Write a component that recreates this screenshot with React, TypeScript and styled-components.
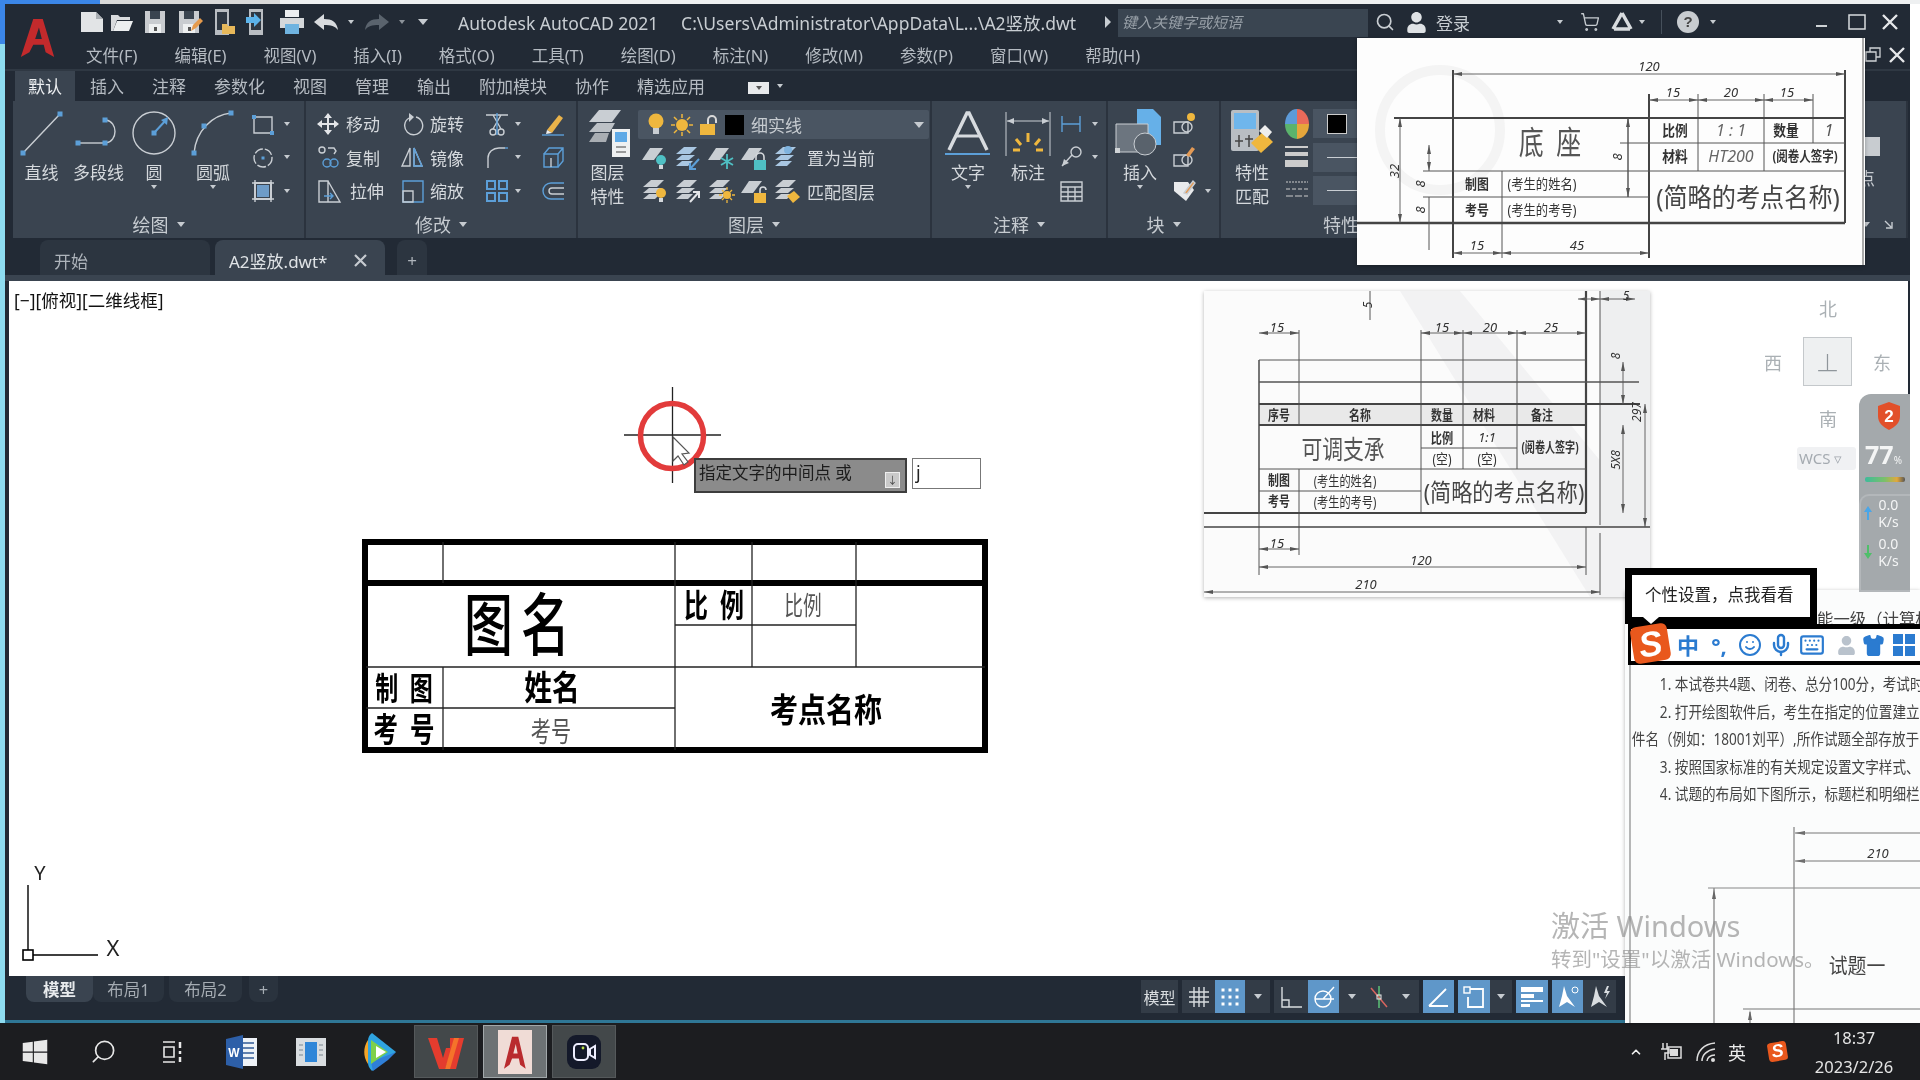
import React from "react";
import styled, { createGlobalStyle } from "styled-components";
import { Search, ShoppingCart, Smile, Mic, Keyboard, Shirt, ChevronUp } from "lucide-react";
import { FaUser, FaWindows } from "react-icons/fa";

const CJK = `"Noto Sans", "Noto Sans CJK SC", sans-serif`;
const LINE = "#c9ced3";
const BLUE = "#5c9fd8";
const GOLD = "#efb73e";
const CYAN = "#4fc0c4";

const Global = createGlobalStyle`
  html, body { margin: 0; padding: 0; background: #fff; }
  body { font-family: ${CJK}; overflow: hidden; }
  * { box-sizing: border-box; }
`;

const Page = styled.div`
  position: relative;
  width: 1920px;
  height: 1080px;
  display: flex;
  flex-direction: column;
  overflow: hidden;
  background: #fff;
  filter: blur(0.5px);
`;

const TopStrip = styled.div`
  height: 4px;
  background: linear-gradient(to right, #3b86e8 0 100px, #d9d9d9 100px 280px, #eef0f1 280px 1920px);
`;

const Body = styled.div`
  flex: 1;
  display: flex;
  min-height: 0;
`;

const LeftEdge = styled.div`
  width: 5px;
  background: linear-gradient(to bottom, #3b86e8 0 40px, #8edcf0 40px);
`;

const Win = styled.div`
  width: 1905px;
  display: flex;
  flex-direction: column;
  background: #222a35;
  border-bottom: 3px solid #2f7796;
`;

const Header = styled.div`
  display: flex;
  height: 67px;
  border-bottom: 2px solid #2f3843;
`;

const LogoCell = styled.div`
  width: 70px;
  padding: 14px 0 0 15px;
`;

const HeaderRows = styled.div`
  flex: 1;
  display: flex;
  flex-direction: column;
`;

const TitleRow = styled.div`
  height: 36px;
  display: flex;
  align-items: center;
  color: #c8cdd2;
  font-size: 18px;
`;

const QatIcon = styled.div<{ $w?: number }>`
  width: ${(p) => p.$w ?? 34}px;
  display: flex;
  justify-content: center;
  align-items: center;
`;

const TitleText = styled.span`
  margin-left: 21px;
  white-space: pre;
  width: 647px;
  font-size: 17.5px;
`;

const SearchBox = styled.div`
  width: 250px;
  height: 28px;
  margin-left: 6px;
  margin-top: 2px;
  padding-left: 4px;
  background: #3a4551;
  color: #98a0a8;
  font-size: 15px;
  font-style: italic;
  line-height: 26px;
`;

const TitleSide = styled.div<{ $w: number; $ml?: number }>`
  width: ${(p) => p.$w}px;
  margin-left: ${(p) => p.$ml ?? 0}px;
  display: flex;
  justify-content: center;
  align-items: center;
  color: #c8cdd2;
  font-size: 17px;
`;

const WinDivider = styled.div`
  width: 1px;
  height: 24px;
  background: #46505b;
  margin: 0 14px;
`;

const MenuRow = styled.div`
  height: 29px;
  display: flex;
  align-items: center;
  gap: 37px;
  padding-left: 11px;
  color: #b5bbc2;
  font-size: 16.5px;
`;

const MenuItem = styled.span`
  white-space: nowrap;
`;

const MenuEnd = styled.div`
  margin-left: auto;
  padding-right: 4px;
  display: flex;
  align-items: center;
  gap: 7px;
`;

const TabRow = styled.div`
  height: 30px;
  display: flex;
  align-items: stretch;
  padding-left: 10px;
  gap: 2px;
  color: #b5bbc2;
  font-size: 17px;
`;

const RibbonTab = styled.div<{ $active?: boolean }>`
  padding: 2px 13px 0;
  line-height: 28px;
  white-space: nowrap;
  background: ${(p) => (p.$active ? "#3a4450" : "transparent")};
  color: ${(p) => (p.$active ? "#eceff1" : "#b5bbc2")};
`;

const TabToggle = styled.div`
  width: 21px;
  height: 12px;
  margin: 11px 4px 0 28px;
  background: #e8eaec;
  display: flex;
  align-items: center;
  justify-content: center;
`;

const Ribbon = styled.div`
  height: 137px;
  display: flex;
  padding-left: 8px;
`;

const Panel = styled.div<{ $w: number }>`
  width: ${(p) => p.$w}px;
  display: flex;
  flex-direction: column;
  background: #3a4450;
  border-right: 2px solid #2b333e;
`;

const PanelBody = styled.div<{ $pl?: number }>`
  flex: 1;
  display: flex;
  padding-left: ${(p) => p.$pl ?? 0}px;
  min-height: 0;
`;

const PanelFoot = styled.div<{ $pl?: number }>`
  height: 28px;
  display: flex;
  align-items: center;
  justify-content: ${(p) => (p.$pl === undefined ? "center" : "flex-start")};
  padding-left: ${(p) => p.$pl ?? 0}px;
  gap: 8px;
  color: #c6cbd0;
  font-size: 18px;
`;

const TailMarks = styled.div`
  margin-left: 495px;
  display: flex;
  align-items: center;
  gap: 14px;
`;

const LargeTool = styled.div<{ $w: number }>`
  width: ${(p) => p.$w}px;
  flex: none;
  display: flex;
  flex-direction: column;
  align-items: center;
  padding-top: 8px;
  color: #d5d9dd;
  font-size: 17px;
  line-height: 24px;
`;

const LargeIcon = styled.div`
  height: 48px;
  margin-bottom: 4px;
  display: flex;
  align-items: center;
`;

const ToolLabel = styled.span`
  white-space: nowrap;
`;

const Stack = styled.div<{ $pl?: number }>`
  padding: 6px 0 0 ${(p) => p.$pl ?? 0}px;
  display: flex;
  flex-direction: column;
`;

const StackRow = styled.div`
  height: 33.5px;
  display: flex;
  align-items: center;
  gap: 9px;
`;

const ModifyGrid = styled.div`
  display: grid;
  grid-template-columns: 84px 85px 56px 30px;
  grid-auto-rows: 33.5px;
  padding-top: 6px;
  color: #d5d9dd;
  font-size: 17px;
`;

const ModifyCell = styled.div`
  display: flex;
  align-items: center;
  gap: 6px;
`;

const LayerCol = styled.div`
  width: 291px;
  margin-left: 8px;
`;

const LayerBar = styled.div`
  height: 29px;
  margin-top: 9px;
  margin-bottom: 2px;
  display: flex;
  align-items: center;
  background: #4a5562;
  padding: 0 5px;
  color: #c6cbd0;
  font-size: 17px;
  border-radius: 2px;
`;

const BarIcon = styled.div`
  width: 26px;
  display: flex;
  justify-content: center;
`;

const Swatch = styled.div`
  width: 19px;
  height: 20px;
  background: #000;
  margin: 0 7px 0 4px;
`;

const BarName = styled.span`
  flex: 1;
`;

const LayerRow = styled.div`
  height: 33.5px;
  display: flex;
  align-items: center;
  color: #d5d9dd;
  font-size: 17px;
`;

const LayerIcon = styled.div`
  width: 33px;
  display: flex;
  justify-content: center;
`;

const LayerText = styled.span`
  margin-left: 4px;
`;

const PropCol = styled.div`
  width: 90px;
  padding-top: 6px;
  display: flex;
  flex-direction: column;
`;

const PropRow = styled.div`
  height: 33.5px;
  display: flex;
  align-items: center;
  gap: 4px;
  padding-left: 2px;
`;

const PropBox = styled.div`
  flex: 1;
  height: 29px;
  background: #4a5562;
  display: flex;
  align-items: center;
  padding-left: 14px;
`;

const PropSwatch = styled.div`
  width: 20px;
  height: 20px;
  background: #000;
  border: 1px solid #ccc;
`;

const PropLine = styled.div`
  flex: 1;
  height: 1px;
  background: #c9ced3;
`;

const TailCol = styled.div`
  margin-left: 485px;
  padding-top: 36px;
  color: #c6cbd0;
  font-size: 17px;
  line-height: 24px;
`;

const TailBlock = styled.div`
  width: 22px;
  height: 19px;
  background: #c8ccd0;
  margin-bottom: 11px;
`;

const FileTabs = styled.div`
  height: 43px;
  display: flex;
  align-items: stretch;
  gap: 5px;
  padding-left: 35px;
  border-bottom: 6px solid #3a4450;
  color: #b5bbc2;
  font-size: 17px;
`;

const FileTab = styled.div<{ $w: number; $active?: boolean; $center?: boolean; $ml?: number }>`
  width: ${(p) => p.$w}px;
  margin-top: 2px;
  margin-left: ${(p) => p.$ml ?? 0}px;
  display: flex;
  align-items: center;
  justify-content: ${(p) => (p.$center ? "center" : "space-between")};
  padding: 5px ${(p) => (p.$center ? 0 : 18)}px 0 ${(p) => (p.$center ? 0 : 14)}px;
  background: ${(p) => (p.$active ? "#3a4450" : "#2c3540")};
  color: ${(p) => (p.$active ? "#dfe3e6" : "#aeb4bb")};
  border-radius: 8px 8px 0 0;
`;

const Canvas = styled.div`
  position: relative;
  flex: 1;
  margin-left: 4px;
  margin-right: 2px;
  background: #fff;
  min-height: 0;
`;

const ViewLabel = styled.div`
  position: absolute;
  left: 5px;
  top: 6px;
  font-size: 17.5px;
  color: #111;
`;

const DrawingSvg = styled.svg`
  position: absolute;
  left: 0;
  top: 0;
`;

const DocOverlaySvg = styled.svg`
  position: absolute;
  left: 1625px;
  top: 590px;
`;

const StyledText = styled.text`
  font-family: ${CJK};
`;

const CmdTip = styled.div`
  position: absolute;
  left: 685px;
  top: 177px;
  width: 213px;
  height: 35px;
  background: #8b8b8b;
  border: 2px solid #3d3d3d;
  padding-left: 3px;
  color: #1c1c1c;
  font-size: 16.5px;
  line-height: 26px;
`;

const CmdDown = styled.span`
  position: absolute;
  right: 5px;
  top: 12px;
  width: 15px;
  height: 16px;
  background: #c9c9c9;
  border: 1px solid #eee;
  color: #444;
  font-size: 10px;
  line-height: 14px;
  text-align: center;
`;

const CmdInput = styled.div`
  position: absolute;
  left: 903px;
  top: 177px;
  width: 69px;
  height: 31px;
  background: #fff;
  border: 1px solid #777;
  padding-left: 3px;
  color: #222;
  font-size: 18px;
  line-height: 26px;
`;

const CubeLetter = styled.span<{ $x: number; $y: number }>`
  position: absolute;
  left: ${(p) => p.$x}px;
  top: ${(p) => p.$y}px;
  color: #aab0b4;
  font-size: 18px;
  transform: translate(-50%, -50%);
`;

const CubeFace = styled.div`
  position: absolute;
  left: 1794px;
  top: 56px;
  width: 49px;
  height: 49px;
  background: #eef0f1;
  border: 1px solid #c4c8cb;
  display: flex;
  align-items: center;
  justify-content: center;
  color: #8f969b;
  font-size: 24px;
  font-weight: 300;
`;

const WcsChip = styled.div`
  position: absolute;
  left: 1788px;
  top: 166px;
  width: 59px;
  height: 23px;
  background: #f0f1f3;
  border-radius: 3px;
  padding-left: 2px;
  color: #a4aab0;
  font-size: 15px;
  line-height: 22px;
`;

const Footer = styled.div`
  height: 44px;
  display: flex;
  padding-left: 21px;
`;

const LayoutTab = styled.div<{ $w: number; $active?: boolean; $ml?: number }>`
  width: ${(p) => p.$w}px;
  height: 26px;
  margin-left: ${(p) => p.$ml ?? 0}px;
  background: ${(p) => (p.$active ? "#3a4450" : "#2a333e")};
  color: ${(p) => (p.$active ? "#e8ebed" : "#a5acb3")};
  border-radius: 0 0 8px 8px;
  text-align: center;
  font-size: 16.5px;
  line-height: 28px;
  font-weight: ${(p) => (p.$active ? 700 : 400)};
`;

const StatusBar = styled.div`
  margin-left: auto;
  margin-right: 294px;
  margin-top: 4px;
  height: 33px;
  display: flex;
  gap: 4px;
`;

const StatusGroup = styled.div`
  display: flex;
  align-items: stretch;
  background: #333c47;
`;

const StatusBtn = styled.div<{ $w: number; $on?: boolean }>`
  width: ${(p) => p.$w}px;
  display: flex;
  align-items: center;
  justify-content: center;
  background: ${(p) => (p.$on ? "#5f97c9" : "transparent")};
  color: #d9dde0;
  font-size: 16px;
`;

const TaskBar = styled.div`
  height: 57px;
  display: flex;
  align-items: center;
  background: #1c1d20;
`;

const TaskSlot = styled.div`
  width: 69px;
  display: flex;
  justify-content: center;
  color: #e8e8e8;
`;

const Mirrored = styled.div`
  display: flex;
  transform: scaleX(-1);
`;

const TaskBox = styled.div<{ $on?: boolean }>`
  width: 64px;
  height: 53px;
  margin-right: 5px;
  display: flex;
  align-items: center;
  justify-content: center;
  background: ${(p) => (p.$on ? "#6d7274" : "#43484a")};
  border: 1px solid ${(p) => (p.$on ? "#a2a8aa" : "#55595b")};
`;

const Tray = styled.div`
  margin-left: auto;
  margin-right: 10px;
  display: flex;
  align-items: center;
  color: #ececec;
`;

const TrayItem = styled.div<{ $w: number }>`
  width: ${(p) => p.$w}px;
  display: flex;
  justify-content: center;
  font-size: 18px;
`;

const Clock = styled.div`
  width: 112px;
  text-align: center;
  font-size: 16.5px;
  line-height: 29px;
  color: #e4e4e4;
`;

const SogouMark = styled.div<{ $s: number }>`
  width: ${(p) => p.$s}px;
  height: ${(p) => p.$s}px;
  background: #e9581d;
  border-radius: ${(p) => p.$s * 0.16}px;
  transform: rotate(-9deg);
  display: flex;
  align-items: center;
  justify-content: center;
  color: #fff;
  font-family: "Liberation Sans", sans-serif;
  font-weight: 700;
  font-style: italic;
  font-size: ${(p) => p.$s * 0.95}px;
  line-height: 1;
`;

const Sheet = styled.div<{ $l: number; $t: number; $w: number; $h: number; $bg?: string }>`
  position: absolute;
  left: ${(p) => p.$l}px;
  top: ${(p) => p.$t}px;
  width: ${(p) => p.$w}px;
  height: ${(p) => p.$h}px;
  background: ${(p) => p.$bg ?? "#fbfbfb"};
  box-shadow: 0 1px 4px rgba(0, 0, 0, 0.3);
  overflow: hidden;
`;

const Widget = styled.div`
  position: absolute;
  left: 1859px;
  top: 394px;
  width: 51px;
  height: 198px;
  padding: 7px 0 0 8px;
  background: #a4a9ac;
  border-radius: 12px 0 0 0;
  color: #f4f5f5;
  display: flex;
  flex-direction: column;
  align-items: center;
`;

const Percent = styled.div`
  margin-top: 9px;
  margin-left: -10px;
  font-size: 25px;
  font-weight: 700;
  line-height: 28px;
  white-space: nowrap;
`;

const PercentSign = styled.span`
  font-size: 10px;
  font-weight: 400;
`;

const WidgetBar = styled.div`
  width: 40px;
  height: 5px;
  margin-top: 3px;
  margin-left: -8px;
  border-radius: 2px;
  background: linear-gradient(to right, #3dbb9b, #7cc06a 50%, #e3a83c 80%, #555);
`;

const SpeedBox = styled.div`
  position: absolute;
  left: 0;
  top: 100px;
  width: 51px;
  height: 98px;
  border: 2px solid #b3b7ba;
  border-right: 0;
  border-radius: 10px 0 0 0;
`;

const Speed = styled.div<{ $mt: number }>`
  position: relative;
  margin-top: ${(p) => p.$mt}px;
  font-size: 14px;
  line-height: 17px;
  text-align: center;
`;

const SpeedArrow = styled.span`
  position: absolute;
  left: -14px;
  top: 10px;
`;

const DocText = styled.div`
  padding: 81px 0 0 5px;
  color: #444;
  font-size: 16px;
  line-height: 27.5px;
  white-space: nowrap;
  transform: scaleX(0.85);
  transform-origin: left top;
`;

const DocLine = styled.div<{ $indent?: boolean }>`
  padding-left: ${(p) => (p.$indent ? 36 : 3)}px;
`;

const DocClip = styled.div`
  position: absolute;
  left: 192px;
  top: 16px;
  color: #444;
  font-size: 16.4px;
  white-space: nowrap;
`;

const ImeTip = styled.div`
  position: absolute;
  left: 1625px;
  top: 568px;
  width: 192px;
  height: 56px;
  border: 7px solid #000;
  background: #fff;
  color: #222;
  font-size: 16.5px;
  line-height: 40px;
  padding-left: 13px;
  white-space: nowrap;
`;

const ImeTail = styled.div`
  position: absolute;
  left: 1643px;
  top: 617px;
  border-left: 8px solid transparent;
  border-right: 8px solid transparent;
  border-top: 7px solid #fff;
`;

const ImeBar = styled.div`
  position: absolute;
  left: 1628px;
  top: 624px;
  width: 292px;
  height: 41px;
  background: #fff;
  border-top: 5px solid #000;
  border-bottom: 4px solid #000;
  border-left: 3px solid #000;
  display: flex;
  align-items: center;
  color: #2b7bd0;
`;

const ImeMarkWrap = styled.div`
  position: absolute;
  left: 1px;
  top: -4px;
`;

const ImeItem = styled.div<{ $w: number; $ml?: number }>`
  width: ${(p) => p.$w}px;
  margin-left: ${(p) => p.$ml ?? 0}px;
  display: flex;
  justify-content: center;
  font-size: 22px;
  font-weight: 700;
  line-height: 1;
`;

const Activate = styled.div`
  position: absolute;
  left: 1551px;
  top: 906px;
  color: rgba(135, 135, 135, 0.62);
  font-size: 29px;
  line-height: 40px;
  white-space: nowrap;
`;

const ActivateSub = styled.div`
  font-size: 20.5px;
  line-height: 26px;
`;

const FlipSvg = styled.svg<{ $flip?: boolean }>`
  transform: ${(p) => (p.$flip ? "scaleX(-1)" : "none")};
`;

/* ---- small drawing helpers ---- */

type TP = {
  x: number;
  y: number;
  s: number;
  sx?: number;
  rot?: number;
  bold?: boolean;
  medium?: boolean;
  italic?: boolean;
  fill?: string;
  children: React.ReactNode;
};

const T = ({ x, y, s, sx = 1, rot = 0, bold, medium, italic, fill = "#333", children }: TP) => (
  <StyledText
    transform={`translate(${x} ${y}) rotate(${rot}) scale(${sx} 1)`}
    fontSize={s}
    textAnchor="middle"
    dominantBaseline="central"
    fontWeight={bold ? 700 : medium ? 500 : 400}
    fontStyle={italic ? "italic" : "normal"}
    fill={fill}
  >
    {children}
  </StyledText>
);

const Caret = ({ c = "#c6cbd0", s = 4 }: { c?: string; s?: number }) => (
  <svg width={s * 2} height={s + 1}>
    <path d={`M0 0H${s * 2}L${s} ${s + 1}Z`} fill={c} />
  </svg>
);

const Ico = ({ w = 24, h = 24, children }: { w?: number; h?: number; children: React.ReactNode }) => (
  <svg width={w} height={h} viewBox={`0 0 ${w} ${h}`} fill="none" stroke={LINE} strokeWidth={1.4}>
    {children}
  </svg>
);

const Grip = ({ x, y, s = 5 }: { x: number; y: number; s?: number }) => (
  <rect x={x - s / 2} y={y - s / 2} width={s} height={s} fill={BLUE} stroke="none" />
);

const DimH = ({ x1, x2, y, c = "#555" }: { x1: number; x2: number; y: number; c?: string }) => (
  <g stroke={c} fill={c} strokeWidth={0.9}>
    <line x1={x1} x2={x2} y1={y} y2={y} />
    <path d={`M${x1} ${y}l9 -2v4z`} stroke="none" />
    <path d={`M${x2} ${y}l-9 -2v4z`} stroke="none" />
  </g>
);

const DimV = ({ y1, y2, x, c = "#555" }: { y1: number; y2: number; x: number; c?: string }) => (
  <g stroke={c} fill={c} strokeWidth={0.9}>
    <line y1={y1} y2={y2} x1={x} x2={x} />
    <path d={`M${x} ${y1}l-2 9h4z`} stroke="none" />
    <path d={`M${x} ${y2}l-2 -9h4z`} stroke="none" />
  </g>
);

const Ln = ({ a, b, c, d, w = 1, col = "#555" }: { a: number; b: number; c: number; d: number; w?: number; col?: string }) => (
  <line x1={a} y1={b} x2={c} y2={d} stroke={col} strokeWidth={w} />
);

/* ---- icons ---- */

const AcadLogo = () => (
  <svg width="36" height="40" viewBox="0 0 36 42">
    <path d="M13 1h10l12 40-9-5-2-8H13l-4 8-9 5zM15 22h7l-3-12z" fill="#c32a2c" fillRule="evenodd" />
  </svg>
);

const QNew = () => (
  <svg width="24" height="24"><path d="M1 2h15l7 7v13H1z" fill="#e2e4e6" /><path d="M16 2v7h7" fill="#a9aeb3" /></svg>
);
const QOpen = () => (
  <svg width="24" height="24"><path d="M1 21V5h7l2 2h10v3H7L3 21z" fill="#d8dadd" /><path d="M7 11h16l-4 10H3z" fill="#eceef0" /></svg>
);
const QSave = ({ pen }: { pen?: boolean }) => (
  <svg width="26" height="26">
    <path d="M2 2h20v22H2z" fill="#c9ccd0" />
    <path d="M7 2h10v8H7z" fill="#3a4450" />
    <path d="M6 15h12v9H6z" fill="#eef0f1" />
    <path d="M11 18h3v4h-3z" fill="#555" />
    {pen && <path d="M14 22l2-6 7-7 3 3-7 7z" fill="#e59a4c" />}
  </svg>
);
const QPhone = ({ folder, arrow }: { folder?: boolean; arrow?: boolean }) => (
  <svg width="26" height="28">
    <path d="M4 1h14v26H4z" fill="#b9bdc2" />
    <path d="M6 4h10v18H6z" fill="#2f3843" />
    {folder && <path d="M11 16h5l1 2h7v8H11z" fill="#e7b85a" />}
    {arrow && <path d="M1 9h8V5l7 7-7 7v-4H1z" fill="#5cb3ea" />}
  </svg>
);
const QPrint = () => (
  <svg width="26" height="26">
    <path d="M6 1h14v7H6z" fill="#eceef0" />
    <path d="M1 9h24v10H1z" fill="#d4d7da" />
    <path d="M6 15h14v10H6z" fill="#6fb3e0" />
  </svg>
);
const QArrow = ({ flip, c }: { flip?: boolean; c: string }) => (
  <FlipSvg width="26" height="18" $flip={flip}>
    <path d="M11 1v5c8 0 13 3 14 11-3-4-7-5-14-5v5L1 9z" fill={c} />
  </FlipSvg>
);

const IconLine = () => (
  <Ico w={46} h={46}><line x1="4" y1="43" x2="41" y2="4" /><Grip x={4} y={43} /><Grip x={41} y={4} /></Ico>
);
const IconPoly = () => (
  <Ico w={50} h={46}><path d="M4 33H32" /><path d="M32 10c12 2 12 21 0 23" /><Grip x={4} y={33} /><Grip x={31} y={33} /><Grip x={31} y={10} /></Ico>
);
const IconCircle = () => (
  <Ico w={48} h={48}>
    <circle cx="24" cy="24" r="21" />
    <line x1="24" y1="24" x2="36" y2="11" stroke={BLUE} strokeWidth={2} />
    <Grip x={24} y={24} />
    <path d="M38 8l-1 8-6-5z" fill={BLUE} stroke="none" />
  </Ico>
);
const IconArc = () => (
  <Ico w={46} h={48}><path d="M4 44C6 22 22 6 41 4" /><Grip x={4} y={44} /><Grip x={14} y={17} /><Grip x={41} y={4} /></Ico>
);
const IconRect = () => (
  <Ico><path d="M3 5H21V21H3z" /><Grip x={3} y={5} s={4} /><Grip x={21} y={21} s={4} /></Ico>
);
const IconDashCircle = () => (
  <Ico><circle cx="12" cy="13" r="9" strokeDasharray="9 2" /><Grip x={12} y={13} s={3} /></Ico>
);
const IconHatch = () => (
  <Ico><path d="M4 4h16v16H4z" strokeWidth={2} /><path d="M1 4h22M1 20h22M4 1v22M20 1v22" /><path d="M6 6h12v12H6z" fill="#6e9cc8" stroke="none" /></Ico>
);
const IconMove = () => (
  <Ico>
    <path d="M12 2v20M2 12h20" stroke="#e3e5e8" strokeWidth={2} />
    <path d="M12 1l4 5H8zM12 23l4-5H8zM1 12l5-4v8zM23 12l-5-4v8z" fill="#e3e5e8" stroke="none" />
  </Ico>
);
const IconRotate = () => (
  <Ico><path d="M16 5a9 9 0 1 1-7 1" /><path d="M9 1v9l5-5z" fill={LINE} stroke="none" /></Ico>
);
const IconTrim = () => (
  <Ico><path d="M1 3h22M8 3l8 14M16 3L8 17" /><circle cx="8" cy="20" r="3" /><circle cx="16" cy="20" r="3" /><path d="M12 1v22" stroke={BLUE} /></Ico>
);
const IconErase = () => (
  <Ico>
    <path d="M6 18L18 3l4 3-11 15z" fill="#eab34a" stroke="none" />
    <path d="M6 18l5 3-6 1z" fill="#eee" stroke="none" />
    <path d="M1 23h22" stroke={BLUE} />
  </Ico>
);
const IconCopy = () => (
  <Ico><circle cx="6" cy="5" r="3" /><path d="M12 3h6l2 3-2 3" /><circle cx="11" cy="18" r="4" stroke={BLUE} /><circle cx="18" cy="18" r="4" stroke={BLUE} /></Ico>
);
const IconMirror = () => (
  <Ico><path d="M10 3v18H2zM14 3v18h8z" /><path d="M14 3v18h8z" stroke={BLUE} /></Ico>
);
const IconFillet = () => (
  <Ico><path d="M3 23V13C3 7 8 3 14 3h6" /><path d="M20 3h3" stroke={BLUE} /></Ico>
);
const Icon3d = () => (
  <Ico><path d="M3 9h14v13H3z" stroke={BLUE} /><path d="M3 9l5-6h14v13l-5 6M17 9l5-6" stroke={BLUE} /><path d="M10 13v9" /></Ico>
);
const IconStretch = () => (
  <Ico w={28}><path d="M3 2h9v21H3zM12 2l12 21H12" /><path d="M8 17h9M14 14l3 3-3 3" stroke={BLUE} /></Ico>
);
const IconScale = () => (
  <Ico><path d="M3 2h20v21H3z" stroke={BLUE} /><path d="M3 12h10v11H3z" /></Ico>
);
const IconArray = () => (
  <Ico><path d="M2 2h8v8H2zM14 2h8v8h-8zM2 14h8v8H2zM14 14h8v8h-8z" stroke={BLUE} strokeWidth={2} /></Ico>
);
const IconOffset = () => (
  <Ico><path d="M23 4H10a8 8 0 0 0 0 16h13" stroke={BLUE} /><path d="M23 9H11a3 3 0 0 0 0 6h12" /></Ico>
);
const IconLayerStack = () => (
  <svg width="46" height="48">
    <path d="M14 1h22l-9 12H4z" fill="#c9ced3" />
    <path d="M12 14h18l-5 9H4z" fill="#bcc1c6" />
    <path d="M10 24h14l-3 9H4z" fill="#a9aeb3" />
    <rect x="27" y="20" width="18" height="28" fill="#eef0f1" />
    <rect x="30" y="23" width="12" height="10" fill="#5ea9e6" />
    <path d="M31 38h10M31 43h10" stroke="#444" />
  </svg>
);

/* layer tools: a flat plate or a stack of plates, with a little badge bottom right */
const LayerSm = ({ stack, color = "#c9ced3", children }: { stack?: boolean; color?: string; children?: React.ReactNode }) => (
  <svg width="28" height="26" fill="none">
    {stack ? (
      <>
        <path d="M10 2h13l-7 7H2z" fill={color} />
        <path d="M8 10h13l-6 5H2z" fill={color} />
        <path d="M8 16h11l-5 5H2z" fill={color} />
      </>
    ) : (
      <path d="M9 3h13L13 15H1z" fill={color} />
    )}
    {children}
  </svg>
);
const BadgeBulb = ({ c }: { c: string }) => (
  <>
    <circle cx="20" cy="15" r="5" fill={c} />
    <rect x="18" y="20" width="4" height="4" fill="#d5d9dd" />
  </>
);
const BadgeFlake = () => (
  <path d="M20 9v15M14 13l12 7M26 13l-12 7" stroke={CYAN} strokeWidth="1.8" />
);
const BadgeSun = () => (
  <>
    <circle cx="20" cy="17" r="4" fill={GOLD} />
    <path d="M20 9v3M20 22v3M12 17h3M25 17h3M15 12l2 2M25 12l-2 2M15 22l2-2M25 22l-2-2" stroke={GOLD} strokeWidth="1.3" />
  </>
);
const BadgeLock = ({ c, open }: { c: string; open?: boolean }) => (
  <>
    <path d={open ? "M20 15v-3a3 3 0 0 1 6 0" : "M16 15v-3a4 4 0 0 1 8 0v3"} stroke="#d5d9dd" strokeWidth="1.6" />
    <rect x="14" y="15" width="12" height="10" fill={c} />
  </>
);

const Bulb = ({ c = GOLD }: { c?: string }) => (
  <svg width="18" height="24"><circle cx="9" cy="8" r="7.5" fill={c} /><rect x="6" y="15" width="6" height="6" fill="#c9ced3" /></svg>
);
const Sun = () => (
  <svg width="22" height="22"><circle cx="11" cy="11" r="6" fill={GOLD} /><path d="M11 0v4M11 18v4M0 11h4M18 11h4M3 3l3 3M16 16l3 3M19 3l-3 3M6 16l-3 3" stroke={GOLD} strokeWidth="1.5" /></svg>
);
const Lock = () => (
  <svg width="18" height="22" fill="none">
    <path d="M9 10V6a4 4 0 0 1 8 0v3" stroke="#d9d9d9" strokeWidth="2" />
    <rect x="1" y="10" width="15" height="11" fill={GOLD} />
  </svg>
);
const IconTextA = () => (
  <svg width="48" height="46" fill="none">
    <path d="M5 40L23 3h2l18 37" stroke="#d7dbdf" strokeWidth="3.5" />
    <path d="M12 26h24" stroke="#d7dbdf" strokeWidth="3" />
    <path d="M1 44h45" stroke={BLUE} strokeWidth="2" />
  </svg>
);
const IconDim = () => (
  <svg width="48" height="46" fill="none">
    <path d="M2 2v44M46 2v44" stroke={LINE} />
    <path d="M3 11h42" stroke={LINE} />
    <path d="M3 11l7-3v6zM45 11l-7-3v6z" fill={LINE} />
    <path d="M24 23v9M12 29l5 6M36 29l-5 6M9 40h7M32 40h7" stroke={GOLD} strokeWidth="3" />
  </svg>
);
const IconInsert = () => (
  <svg width="50" height="48">
    <path d="M22 0h16l8 8v28H22z" fill="#66b0e8" />
    <path d="M1 15h32v28H1z" fill="#6c757f" stroke="#c9ced3" />
    <circle cx="30" cy="35" r="11" fill="#59626c" stroke="#c9ced3" />
    <rect x="0" y="39" width="5" height="5" fill="#cfd3d6" />
  </svg>
);
const IconMatch = () => (
  <svg width="46" height="48">
    <rect x="2" y="1" width="28" height="41" rx="2" fill="#b9bec3" />
    <rect x="5" y="4" width="22" height="16" fill="#6fb6ec" />
    <path d="M10 26v12M20 26v12M6 32h8M16 30h8" stroke="#444" strokeWidth="1.5" />
    <path d="M22 34l12-11 10 10-12 11z" fill={GOLD} />
    <path d="M30 22l6-6 7 7-5 6z" fill="#eee" />
  </svg>
);
const IconWheel = () => (
  <svg width="24" height="30" viewBox="0 0 24 30">
    <path d="M12 15L12 0A12 15 0 0 1 24 15z" fill="#e96a5a" />
    <path d="M12 15H24A12 15 0 0 1 12 30z" fill="#e5a63b" />
    <path d="M12 15V30A12 15 0 0 1 0 15z" fill="#5bb36c" />
    <path d="M12 15H0A12 15 0 0 1 12 0z" fill="#5d9bd8" />
  </svg>
);
const IconBars = () => (
  <svg width="24" height="24"><rect y="1" width="23" height="2" fill="#ccc" /><rect y="7" width="23" height="4" fill="#ccc" /><rect y="15" width="23" height="7" fill="#ccc" /></svg>
);
const IconDashes = () => (
  <svg width="24" height="24" fill="none" stroke="#ccc"><path d="M1 3h22" strokeDasharray="2 1" /><path d="M1 10h22" strokeDasharray="4 2" /><path d="M1 17h22" strokeDasharray="7 2" /></svg>
);
const Cart = () => <ShoppingCart size={20} color="#c8cdd2" strokeWidth={1.6} />;
const A360 = () => (
  <svg width="24" height="22"><path d="M12 2L3 18M12 2l9 16M4 18h16" stroke="#d8dbde" strokeWidth="3.5" fill="none" /></svg>
);
const Help = () => (
  <svg width="24" height="24"><circle cx="12" cy="12" r="11" fill="#c8ccd0" /><text x="12" y="17" fontSize="15" fontWeight="700" textAnchor="middle" fill="#444" fontFamily="Liberation Sans">?</text></svg>
);
const WinMin = () => <svg width="12" height="12"><rect y="9" width="11" height="2" fill="#cfd3d6" /></svg>;
const WinMax = () => <svg width="18" height="16" fill="none"><rect x="1" y="1" width="16" height="14" stroke="#d8dbde" strokeWidth="1.5" /></svg>;
const WinClose = () => <svg width="18" height="16"><path d="M2 1l14 14M16 1L2 15" stroke="#e6e8ea" strokeWidth="2.4" /></svg>;
const TabClose = () => <svg width="13" height="13"><path d="M1 1l11 11M12 1L1 12" stroke="#c6cbd0" strokeWidth="2.2" /></svg>;
const WinRestore = () => <svg width="16" height="15" fill="none" stroke="#cfd3d6" strokeWidth="1.3"><path d="M1 5h10v9H1zM5 5V1h10v9h-4" /></svg>;
const ExpandMark = () => <svg width="9" height="9"><path d="M1 1l6 6M8 2v6H2" stroke="#c6cbd0" fill="none" strokeWidth="1.4" /></svg>;

const StGrid = () => <Ico w={24}><path d="M7 2v20M12 2v20M17 2v20M2 7h20M2 12h20M2 17h20" stroke="#d9dde0" /></Ico>;
const StDots = () => (
  <svg width="20" height="20">
    {[3, 10, 17].flatMap((y) => [3, 10, 17].map((x) => <rect key={`${x}-${y}`} x={x - 1.5} y={y - 1.5} width="3" height="3" fill="#fff" />))}
  </svg>
);
const StOrtho = () => <Ico><path d="M3 2v20h20M3 15h7v7" stroke="#d9dde0" /></Ico>;
const StPolar = () => <Ico><circle cx="11" cy="14" r="8" stroke="#fff" /><path d="M11 14L22 2M3 14h19" stroke="#fff" /></Ico>;
const StSnap = () => (
  <svg width="22" height="24" fill="none"><path d="M11 1v22" stroke="#5cc277" strokeWidth="1.5" /><path d="M3 3l16 19" stroke="#d9655f" strokeWidth="1.5" /><rect x="9" y="10" width="4" height="4" stroke="#eee" /></svg>
);
const StAngle = () => <Ico><path d="M2 21h19M2 21L19 4" stroke="#fff" strokeWidth={1.8} /></Ico>;
const StBox = () => <Ico><path d="M8 4h13v18H6V12" stroke="#fff" strokeWidth={1.8} /><rect x="2" y="2" width="6" height="6" stroke="#fff" /></Ico>;
const StList = () => (
  <svg width="24" height="22"><path d="M1 1h22v5H1zM1 8h13v4H1zM1 14h22v2H1zM1 18h9v3H1z" fill="#fff" /></svg>
);
const StAnno = ({ bolt, on }: { bolt?: boolean; on?: boolean }) => (
  <svg width="26" height="26">
    <path d="M9 2l3 10 8 11-8-5-8 5 3-11z" fill={on ? "#fff" : "#d9dde0"} />
    {bolt ? <path d="M20 2l-3 7h3l-2 6 5-8h-3l2-5z" fill="#d9dde0" /> : <circle cx="20" cy="6" r="3" fill="none" stroke="#fff" />}
  </svg>
);

const TaskView = () => (
  <svg width="24" height="24" fill="none" stroke="#e8e8e8" strokeWidth="1.6"><path d="M2 2h12M2 22h12" /><path d="M3 7h10v10H3z" /><path d="M19 2v6M19 11v3M19 17v5" strokeWidth="2.5" /></svg>
);
const WordIco = () => (
  <svg width="32" height="36">
    <path d="M12 4h19v28H12z" fill="#eef2f7" />
    <path d="M16 9h12M16 14h12M16 19h12M16 24h12" stroke="#5f7fae" strokeWidth="2" />
    <path d="M0 5l17-4v34L0 31z" fill="#2d5fa8" />
    <text x="8" y="23" fontSize="12" fontWeight="700" textAnchor="middle" fill="#fff" fontFamily="Liberation Sans">W</text>
  </svg>
);
const ReaderIco = () => (
  <svg width="30" height="28">
    <rect width="30" height="28" fill="#d9dde0" />
    <rect x="9" y="4" width="12" height="20" fill="#2f86d8" />
    <path d="M3 7h4M3 12h4M3 17h4M23 7h4M23 12h4M23 17h4" stroke="#7a8791" />
  </svg>
);
const VideoIco = () => (
  <svg width="34" height="40">
    <path d="M9 1l24 19-24 19c-3-3-4-6-4-8V9c0-3 1-6 4-8z" fill="#2fa4e0" />
    <path d="M5 8c-5 7-5 17 0 24V8z" fill="#f3a52a" />
    <path d="M8 30l25-10-8 8-15 11z" fill="#2f7fd8" />
    <path d="M8 8l17 12-17 12z" fill="#7fd04a" />
    <path d="M13 14l10 6-10 6z" fill="#fff" />
  </svg>
);
const WpsIco = () => (
  <svg width="36" height="34">
    <path d="M0 3h9l6 20 3-10h7l-8 21h-6zM22 3h14L28 34h-6z" fill="#e43c2e" />
    <path d="M17 34l9-31h5l-9 31z" fill="#f5732a" />
  </svg>
);
const AcadTile = () => (
  <svg width="34" height="44">
    <rect width="34" height="44" fill="#f0dcd6" />
    <g transform="translate(6 6) scale(0.62 0.8)">
      <path d="M13 1h10l12 40-9-5-2-8H13l-4 8-9 5zM15 22h7l-3-12z" fill="#b92b2e" fillRule="evenodd" />
    </g>
  </svg>
);
const RecIco = () => (
  <svg width="34" height="34" fill="none">
    <rect width="34" height="34" rx="9" fill="#14192a" />
    <rect x="7" y="9" width="14" height="16" rx="4" stroke="#eef" strokeWidth="2" />
    <path d="M23 14l5-3v12l-5-3z" stroke="#eef" strokeWidth="2" />
    <circle cx="16" cy="13" r="1.4" fill="#b9e04a" />
  </svg>
);
const BatteryIco = () => (
  <svg width="24" height="20" fill="none" stroke="#ddd" strokeWidth="1.5"><path d="M5 1v6M9 1v6M3 7h8v4H7v7" /><rect x="10" y="5" width="13" height="11" /><rect x="12" y="7" width="8" height="7" fill="#ddd" stroke="none" /></svg>
);
const WifiIco = () => (
  <svg width="22" height="22" fill="none" stroke="#ddd" strokeWidth="1.5"><path d="M2 20C2 10 9 3 20 2M7 20c0-6 5-11 13-12M12 20c0-3 3-6 8-6" /><circle cx="18" cy="19" r="2" fill="#ddd" stroke="none" /></svg>
);

/* ---- floating sheets of the exam paper ---- */

const SheetOne = () => (
  <Sheet $l={1357} $t={38} $w={508} $h={227}>
    <svg width="508" height="227" viewBox="1357 38 508 227">
      <rect x="1357" y="38" width="508" height="227" fill="#fdfdfd" />
      <circle cx="1440" cy="130" r="60" fill="none" stroke="#f4f4f4" strokeWidth="10" />
      <Ln a={1863} b={38} c={1863} d={265} w={2} col="#aaa" />
      <g>
        <Ln a={1453} b={70} c={1453} d={258} w={2} col="#444" />
        <Ln a={1502} b={171} c={1502} d={258} />
        <Ln a={1628} b={118} c={1628} d={197} />
        <Ln a={1649} b={94} c={1649} d={258} w={2} col="#444" />
        <Ln a={1698} b={94} c={1698} d={171} />
        <Ln a={1764} b={94} c={1764} d={171} />
        <Ln a={1813} b={94} c={1813} d={143} />
        <Ln a={1845} b={70} c={1845} d={223} w={2} col="#444" />
        <Ln a={1394} b={118} c={1845} d={118} w={2} col="#444" />
        <Ln a={1620} b={143} c={1845} d={143} />
        <Ln a={1423} b={171} c={1845} d={171} />
        <Ln a={1423} b={197} c={1649} d={197} />
        <Ln a={1357} b={223} c={1845} d={223} w={2.4} col="#444" />
      </g>
      <DimH x1={1453} x2={1845} y={74} />
      <DimH x1={1649} x2={1698} y={100} />
      <DimH x1={1698} x2={1764} y={100} />
      <DimH x1={1764} x2={1813} y={100} />
      <DimH x1={1453} x2={1502} y={253} />
      <DimH x1={1502} x2={1649} y={253} />
      <DimV x={1400} y1={118} y2={223} />
      <DimV x={1429} y1={145} y2={171} />
      <Ln a={1429} b={197} c={1429} d={250} />
      <DimV x={1628} y1={118} y2={197} />
      <T x={1649} y={66} s={13} italic>120</T>
      <T x={1673} y={92} s={13} italic>15</T>
      <T x={1731} y={92} s={13} italic>20</T>
      <T x={1787} y={92} s={13} italic>15</T>
      <T x={1477} y={245} s={13} italic>15</T>
      <T x={1577} y={245} s={13} italic>45</T>
      <T x={1394} y={171} s={13} italic rot={-90}>32</T>
      <T x={1420} y={184} s={13} italic rot={-90}>8</T>
      <T x={1420} y={210} s={13} italic rot={-90}>8</T>
      <T x={1617} y={157} s={13} italic rot={-90}>8</T>
      <T x={1550} y={141} s={32} sx={0.78} fill="#555">底&#8194;座</T>
      <T x={1675} y={130} s={15} sx={0.85} bold>比例</T>
      <T x={1731} y={130} s={16} italic fill="#666">1 : 1</T>
      <T x={1786} y={130} s={15} sx={0.85} bold>数量</T>
      <T x={1829} y={130} s={16} italic fill="#555">1</T>
      <T x={1675} y={156} s={15} sx={0.85} bold>材料</T>
      <T x={1731} y={156} s={16} italic fill="#666">HT200</T>
      <T x={1805} y={156} s={14} sx={0.82} bold>(阅卷人签字)</T>
      <T x={1477} y={184} s={14} sx={0.85} bold>制图</T>
      <T x={1542} y={184} s={14} sx={0.88}>(考生的姓名)</T>
      <T x={1477} y={210} s={14} sx={0.85} bold>考号</T>
      <T x={1542} y={210} s={14} sx={0.88}>(考生的考号)</T>
      <T x={1748} y={197} s={26} sx={0.93} fill="#444">(简略的考点名称)</T>
    </svg>
  </Sheet>
);

const SheetTwo = () => (
  <Sheet $l={1204} $t={291} $w={446} $h={306} $bg="#f8f8f8">
    <svg width="446" height="306" viewBox="1204 291 446 306">
      <rect x="1204" y="291" width="446" height="306" fill="#fbfbfb" />
      <path d="M1400 291l60 0 190 230v76h-60z" fill="#f2f2f3" />
      <rect x="1600" y="291" width="50" height="236" fill="#eeeff0" />
      <rect x="1259" y="404" width="327" height="21" fill="#e9e9e9" />
      <Ln a={1259} b={360} c={1259} d={513} w={1.6} />
      <Ln a={1299} b={330} c={1299} d={425} />
      <Ln a={1299} b={469} c={1299} d={513} />
      <Ln a={1299} b={513} c={1299} d={555} />
      <Ln a={1259} b={513} c={1259} d={575} />
      <Ln a={1421} b={330} c={1421} d={513} />
      <Ln a={1463} b={330} c={1463} d={469} />
      <Ln a={1517} b={330} c={1517} d={469} />
      <Ln a={1586} b={291} c={1586} d={513} w={2.2} col="#444" />
      <Ln a={1586} b={527} c={1586} d={575} />
      <Ln a={1600} b={291} c={1600} d={525} />
      <Ln a={1600} b={533} c={1600} d={595} />
      <Ln a={1259} b={360} c={1586} d={360} />
      <Ln a={1259} b={382} c={1639} d={382} w={1.4} />
      <Ln a={1259} b={404} c={1640} d={404} w={2.2} col="#444" />
      <Ln a={1259} b={425} c={1586} d={425} w={2.2} col="#444" />
      <Ln a={1421} b={448} c={1517} d={448} />
      <Ln a={1259} b={469} c={1586} d={469} />
      <Ln a={1259} b={491} c={1421} d={491} />
      <Ln a={1204} b={513} c={1586} d={513} w={2.2} col="#444" />
      <Ln a={1204} b={527} c={1650} d={527} w={1.4} col="#444" />
      <Ln a={1370} b={291} c={1370} d={320} />
      <DimH x1={1259} x2={1299} y={333} />
      <DimH x1={1421} x2={1463} y={333} />
      <DimH x1={1463} x2={1517} y={333} />
      <DimH x1={1517} x2={1586} y={333} />
      <DimH x1={1259} x2={1299} y={549} />
      <DimH x1={1259} x2={1586} y={567} />
      <DimH x1={1204} x2={1600} y={592} />
      <DimH x1={1578} x2={1600} y={299} />
      <DimH x1={1600} x2={1635} y={299} />
      <DimV x={1623} y1={362} y2={404} />
      <DimV x={1623} y1={425} y2={513} />
      <DimV x={1645} y1={404} y2={527} />
      <T x={1367} y={305} s={12} italic rot={-90}>5</T>
      <T x={1277} y={327} s={13} italic>15</T>
      <T x={1442} y={327} s={13} italic>15</T>
      <T x={1490} y={327} s={13} italic>20</T>
      <T x={1551} y={327} s={13} italic>25</T>
      <T x={1277} y={543} s={13} italic>15</T>
      <T x={1421} y={560} s={13} italic>120</T>
      <T x={1366} y={584} s={13} italic>210</T>
      <T x={1626} y={295} s={12} italic>5</T>
      <T x={1615} y={356} s={12} italic rot={-90}>8</T>
      <T x={1615} y={460} s={12} italic rot={-90}>5X8</T>
      <T x={1636} y={412} s={12} italic rot={-90}>297</T>
      <T x={1279} y={415} s={14} sx={0.78} bold>序号</T>
      <T x={1360} y={415} s={14} sx={0.78} bold>名称</T>
      <T x={1442} y={415} s={14} sx={0.78} bold>数量</T>
      <T x={1484} y={415} s={14} sx={0.78} bold>材料</T>
      <T x={1542} y={415} s={14} sx={0.78} bold>备注</T>
      <T x={1343} y={449} s={26} sx={0.8} fill="#555">可调支承</T>
      <T x={1442} y={437} s={14} sx={0.8} bold>比例</T>
      <T x={1487} y={437} s={13} italic>1:1</T>
      <T x={1442} y={459} s={14} sx={0.85}>(空)</T>
      <T x={1487} y={459} s={14} sx={0.85}>(空)</T>
      <T x={1550} y={447} s={14} sx={0.72} bold>(阅卷人签字)</T>
      <T x={1279} y={480} s={14} sx={0.78} bold>制图</T>
      <T x={1345} y={480} s={14} sx={0.8}>(考生的姓名)</T>
      <T x={1279} y={501} s={14} sx={0.78} bold>考号</T>
      <T x={1345} y={501} s={14} sx={0.8}>(考生的考号)</T>
      <T x={1504} y={492} s={24} sx={0.88} fill="#444">(简略的考点名称)</T>
    </svg>
  </Sheet>
);

const DocSheet = () => (
  <Sheet $l={1625} $t={590} $w={295} $h={433} $bg="#fbfcfc">
    <DocClip>能一级（计算机</DocClip>
    <DocText>
      <DocLine $indent>1. 本试卷共4题、闭卷、总分100分，考试时</DocLine>
      <DocLine $indent>2. 打开绘图软件后，考生在指定的位置建立</DocLine>
      <DocLine>件名（例如：18001刘平）,所作试题全部存放于</DocLine>
      <DocLine $indent>3. 按照国家标准的有关规定设置文字样式、</DocLine>
      <DocLine $indent>4. 试题的布局如下图所示，标题栏和明细栏</DocLine>
    </DocText>
  </Sheet>
);

const DocDrawing = () => (
  <DocOverlaySvg width="295" height="433" viewBox="1625 590 295 433">
    <Ln a={1630} b={592} c={1630} d={1023} w={1.2} col="#888" />
    <Ln a={1794} b={827} c={1794} d={1023} w={1} col="#666" />
    <Ln a={1714} b={888} c={1714} d={1023} w={1} col="#666" />
    <Ln a={1708} b={888} c={1920} d={888} w={1.2} col="#888" />
    <Ln a={1743} b={1009} c={1920} d={1009} w={1.2} col="#777" />
    <Ln a={1750} b={1012} c={1750} d={1023} w={1} col="#666" />
    <path d="M1714 889l-2 10h4zM1750 1010l-2 10h4zM1795 833l10-2v4zM1795 861l10-2v4z" fill="#666" />
    <Ln a={1795} b={833} c={1920} d={833} col="#777" />
    <Ln a={1795} b={861} c={1920} d={861} col="#777" />
    <T x={1878} y={853} s={13} italic>210</T>
    <T x={1857} y={965} s={21} sx={0.9} fill="#444">试题一</T>
  </DocOverlaySvg>
);

export default function App() {
  return (
    <>
      <Global />
      <Page>
        <TopStrip />
        <Body>
          <LeftEdge />
          <Win>
            <Header>
              <LogoCell>
                <AcadLogo />
              </LogoCell>
              <HeaderRows>
                <TitleRow>
                  <QatIcon $w={4} />
                  <QatIcon $w={26}><QNew /></QatIcon>
                  <QatIcon><QOpen /></QatIcon>
                  <QatIcon><QSave /></QatIcon>
                  <QatIcon><QSave pen /></QatIcon>
                  <QatIcon><QPhone folder /></QatIcon>
                  <QatIcon><QPhone arrow /></QatIcon>
                  <QatIcon><QPrint /></QatIcon>
                  <QatIcon><QArrow c="#d8dbde" /></QatIcon>
                  <QatIcon $w={16}><Caret s={3} /></QatIcon>
                  <QatIcon $w={36}><QArrow flip c="#5a636d" /></QatIcon>
                  <QatIcon $w={14}><Caret s={3} c="#8c939a" /></QatIcon>
                  <QatIcon $w={28}><Caret s={5} /></QatIcon>
                  <TitleText>{"Autodesk AutoCAD 2021     C:\\Users\\Administrator\\AppData\\L...\\A2竖放.dwt"}</TitleText>
                  <svg width="7" height="12"><path d="M0 0l6 6-6 6z" fill="#c8cdd2" /></svg>
                  <SearchBox>键入关键字或短语</SearchBox>
                  <TitleSide $w={34}><Search size={20} color="#c8cdd2" /></TitleSide>
                  <TitleSide $w={28}><FaUser size={21} color="#dfe2e5" /></TitleSide>
                  <TitleSide $w={42} $ml={2}>登录</TitleSide>
                  <TitleSide $w={10} $ml={81}><Caret s={3} /></TitleSide>
                  <TitleSide $w={30} $ml={10}><Cart /></TitleSide>
                  <TitleSide $w={30} $ml={2}><A360 /></TitleSide>
                  <TitleSide $w={10}><Caret s={3} /></TitleSide>
                  <WinDivider />
                  <TitleSide $w={24}><Help /></TitleSide>
                  <TitleSide $w={12} $ml={7}><Caret s={3} /></TitleSide>
                  <TitleSide $w={16} $ml={95}><WinMin /></TitleSide>
                  <TitleSide $w={20} $ml={17}><WinMax /></TitleSide>
                  <TitleSide $w={20} $ml={13}><WinClose /></TitleSide>
                </TitleRow>
                <MenuRow>
                  {["文件(F)", "编辑(E)", "视图(V)", "插入(I)", "格式(O)", "工具(T)", "绘图(D)", "标注(N)", "修改(M)", "参数(P)", "窗口(W)", "帮助(H)"].map((m) => (
                    <MenuItem key={m}>{m}</MenuItem>
                  ))}
                  <MenuEnd>
                    <WinRestore />
                    <WinClose />
                  </MenuEnd>
                </MenuRow>
              </HeaderRows>
            </Header>
            <TabRow>
              {["默认", "插入", "注释", "参数化", "视图", "管理", "输出", "附加模块", "协作", "精选应用"].map((t, i) => (
                <RibbonTab key={t} $active={i === 0}>{t}</RibbonTab>
              ))}
              <TabToggle><Caret s={3} c="#555" /></TabToggle>
              <QatIcon $w={10}><Caret s={3} /></QatIcon>
            </TabRow>
            <Ribbon>
              <Panel $w={293}>
                <PanelBody>
                  <LargeTool $w={57}><LargeIcon><IconLine /></LargeIcon><ToolLabel>直线</ToolLabel></LargeTool>
                  <LargeTool $w={57}><LargeIcon><IconPoly /></LargeIcon><ToolLabel>多段线</ToolLabel></LargeTool>
                  <LargeTool $w={54}><LargeIcon><IconCircle /></LargeIcon><ToolLabel>圆</ToolLabel><Caret s={3} /></LargeTool>
                  <LargeTool $w={64}><LargeIcon><IconArc /></LargeIcon><ToolLabel>圆弧</ToolLabel><Caret s={3} /></LargeTool>
                  <Stack $pl={6}>
                    <StackRow><IconRect /><Caret s={3} /></StackRow>
                    <StackRow><IconDashCircle /><Caret s={3} /></StackRow>
                    <StackRow><IconHatch /><Caret s={3} /></StackRow>
                  </Stack>
                </PanelBody>
                <PanelFoot>绘图 <Caret /></PanelFoot>
              </Panel>
              <Panel $w={272}>
                <PanelBody $pl={10}>
                  <ModifyGrid>
                    <ModifyCell><IconMove />移动</ModifyCell>
                    <ModifyCell><IconRotate />旋转</ModifyCell>
                    <ModifyCell><IconTrim /><Caret s={3} /></ModifyCell>
                    <ModifyCell><IconErase /></ModifyCell>
                    <ModifyCell><IconCopy />复制</ModifyCell>
                    <ModifyCell><IconMirror />镜像</ModifyCell>
                    <ModifyCell><IconFillet /><Caret s={3} /></ModifyCell>
                    <ModifyCell><Icon3d /></ModifyCell>
                    <ModifyCell><IconStretch />拉伸</ModifyCell>
                    <ModifyCell><IconScale />缩放</ModifyCell>
                    <ModifyCell><IconArray /><Caret s={3} /></ModifyCell>
                    <ModifyCell><IconOffset /></ModifyCell>
                  </ModifyGrid>
                </PanelBody>
                <PanelFoot>修改 <Caret /></PanelFoot>
              </Panel>
              <Panel $w={354}>
                <PanelBody $pl={7}>
                  <LargeTool $w={45}>
                    <LargeIcon><IconLayerStack /></LargeIcon>
                    <ToolLabel>图层</ToolLabel>
                    <ToolLabel>特性</ToolLabel>
                  </LargeTool>
                  <LayerCol>
                    <LayerBar>
                      <BarIcon><Bulb /></BarIcon>
                      <BarIcon><Sun /></BarIcon>
                      <BarIcon><Lock /></BarIcon>
                      <Swatch />
                      <BarName>细实线</BarName>
                      <Caret s={5} />
                    </LayerBar>
                    <LayerRow>
                      <LayerIcon><LayerSm><BadgeBulb c={CYAN} /></LayerSm></LayerIcon>
                      <LayerIcon><LayerSm stack color="#a9c7e2"><path d="M25 14L16 24M16 18v6h6" stroke="#5c9fd8" strokeWidth="2" /></LayerSm></LayerIcon>
                      <LayerIcon><LayerSm><BadgeFlake /></LayerSm></LayerIcon>
                      <LayerIcon><LayerSm><BadgeLock c={CYAN} /></LayerSm></LayerIcon>
                      <LayerIcon><LayerSm stack color="#a9c7e2"><circle cx="15" cy="5" r="4" fill="#7fb3de" /></LayerSm></LayerIcon>
                      <LayerText>置为当前</LayerText>
                    </LayerRow>
                    <LayerRow>
                      <LayerIcon><LayerSm stack><BadgeBulb c={GOLD} /></LayerSm></LayerIcon>
                      <LayerIcon><LayerSm stack><path d="M16 24L25 14M25 20v-6h-6" stroke="#e3e5e8" strokeWidth="2" /></LayerSm></LayerIcon>
                      <LayerIcon><LayerSm stack><BadgeSun /></LayerSm></LayerIcon>
                      <LayerIcon><LayerSm><BadgeLock c={GOLD} open /></LayerSm></LayerIcon>
                      <LayerIcon><LayerSm stack><path d="M14 18l7-5 6 6-7 6z" fill={GOLD} /></LayerSm></LayerIcon>
                      <LayerText>匹配图层</LayerText>
                    </LayerRow>
                  </LayerCol>
                </PanelBody>
                <PanelFoot>图层 <Caret /></PanelFoot>
              </Panel>
              <Panel $w={176}>
                <PanelBody $pl={2}>
                  <LargeTool $w={68}><LargeIcon><IconTextA /></LargeIcon><ToolLabel>文字</ToolLabel><Caret s={3} /></LargeTool>
                  <LargeTool $w={52}><LargeIcon><IconDim /></LargeIcon><ToolLabel>标注</ToolLabel></LargeTool>
                  <Stack $pl={5}>
                    <StackRow>
                      <Ico><path d="M3 4v16M21 4v16M3 12h18" stroke={BLUE} /></Ico><Caret s={3} />
                    </StackRow>
                    <StackRow>
                      <Ico><circle cx="17" cy="7" r="5" /><path d="M13 10L3 21" /><path d="M3 21l2-7 5 4z" fill={LINE} stroke="none" /></Ico><Caret s={3} />
                    </StackRow>
                    <StackRow>
                      <Ico><path d="M2 3h21v19H2zM2 8h21M2 13h21M2 17.5h21M9 8v14M16 8v14" /></Ico>
                    </StackRow>
                  </Stack>
                </PanelBody>
                <PanelFoot>注释 <Caret /></PanelFoot>
              </Panel>
              <Panel $w={113}>
                <PanelBody>
                  <LargeTool $w={64}><LargeIcon><IconInsert /></LargeIcon><ToolLabel>插入</ToolLabel><Caret s={3} /></LargeTool>
                  <Stack>
                    <StackRow><Ico><path d="M2 10h14v11H2z" /><circle cx="15" cy="15" r="5" /><circle cx="19" cy="5" r="4" fill={GOLD} stroke="none" /></Ico></StackRow>
                    <StackRow><Ico><path d="M2 10h14v11H2z" /><circle cx="15" cy="15" r="5" /><path d="M14 10l6-8 3 2-6 8z" fill="#e39a55" stroke="none" /></Ico></StackRow>
                    <StackRow>
                      <Ico><path d="M2 3h14l6 8-8 11L2 12z" fill="#e8eaec" stroke="none" /><path d="M12 14L21 2l2 2-8 11z" fill="#e39a55" /></Ico>
                      <Caret s={3} />
                    </StackRow>
                  </Stack>
                </PanelBody>
                <PanelFoot>块 <Caret /></PanelFoot>
              </Panel>
              <Panel $w={687}>
                <PanelBody>
                  <LargeTool $w={62}>
                    <LargeIcon><IconMatch /></LargeIcon>
                    <ToolLabel>特性</ToolLabel>
                    <ToolLabel>匹配</ToolLabel>
                  </LargeTool>
                  <PropCol>
                    <PropRow><IconWheel /><PropBox><PropSwatch /></PropBox></PropRow>
                    <PropRow><IconBars /><PropBox><PropLine /></PropBox></PropRow>
                    <PropRow><IconDashes /><PropBox><PropLine /></PropBox></PropRow>
                  </PropCol>
                  <TailCol>
                    <TailBlock />点
                  </TailCol>
                </PanelBody>
                <PanelFoot $pl={102}>
                  特性
                  <TailMarks>
                    <Caret />
                    <ExpandMark />
                  </TailMarks>
                </PanelFoot>
              </Panel>
            </Ribbon>
            <FileTabs>
              <FileTab $w={170}>开始</FileTab>
              <FileTab $w={170} $active>A2竖放.dwt*<TabClose /></FileTab>
              <FileTab $w={30} $center $ml={7}>+</FileTab>
            </FileTabs>
            <Canvas>
              <ViewLabel>[−][俯视][二维线框]</ViewLabel>
              <DrawingSvg width="1899" height="696" viewBox="9 281 1899 696">
                <g stroke="#000" fill="none">
                  <path d="M28 885V955H98" strokeWidth="1.4" />
                  <rect x="23" y="950" width="10" height="10" fill="#fff" strokeWidth="1.6" />
                </g>
                <T x={40} y={872} s={20} fill="#222">Y</T>
                <T x={113} y={947} s={22} fill="#222">X</T>
                <g stroke="#000">
                  <rect x="365" y="542" width="620" height="208" fill="none" strokeWidth="6" />
                  <line x1="362" x2="988" y1="583" y2="583" strokeWidth="6" />
                  <g strokeWidth="1.3" stroke="#222">
                    <line x1="443" x2="443" y1="542" y2="583" />
                    <line x1="675" x2="675" y1="542" y2="750" />
                    <line x1="752" x2="752" y1="542" y2="667" />
                    <line x1="856" x2="856" y1="542" y2="667" />
                    <line x1="366" x2="985" y1="667" y2="667" />
                    <line x1="675" x2="856" y1="625" y2="625" />
                    <line x1="366" x2="675" y1="708" y2="708" />
                    <line x1="443" x2="443" y1="667" y2="750" />
                  </g>
                </g>
                <T x={517} y={624} s={68} sx={0.72} medium fill="#000">图&#8201;名</T>
                <T x={714} y={605} s={32} sx={0.75} bold fill="#000">比&#8194;例</T>
                <T x={803} y={605} s={26} sx={0.72} fill="#555">比例</T>
                <T x={404} y={687} s={32} sx={0.72} bold fill="#000">制&#8194;图</T>
                <T x={404} y={729} s={34} sx={0.72} bold fill="#000">考&#8194;号</T>
                <T x={552} y={687} s={34} sx={0.82} bold fill="#000">姓名</T>
                <T x={551} y={731} s={28} sx={0.72} fill="#555">考号</T>
                <T x={826} y={709} s={33} sx={0.85} bold fill="#000">考点名称</T>
                <g stroke="#222" strokeWidth="1.3">
                  <line x1="672.5" x2="672.5" y1="387" y2="483" />
                  <line x1="624" x2="721" y1="435" y2="435" />
                </g>
                <ellipse cx="672" cy="436" rx="31.5" ry="32.5" fill="none" stroke="#e23b3b" strokeWidth="5.5" />
                <path d="M673 437v24l5-5 6 9 4-3-6-8 7-1z" fill="#fff" stroke="#555" strokeWidth="1.2" />
              </DrawingSvg>
              <CmdTip>指定文字的中间点 或<CmdDown>↓</CmdDown></CmdTip>
              <CmdInput>j</CmdInput>
              <CubeLetter $x={1819} $y={27}>北</CubeLetter>
              <CubeLetter $x={1764} $y={81}>西</CubeLetter>
              <CubeLetter $x={1873} $y={81}>东</CubeLetter>
              <CubeLetter $x={1819} $y={137}>南</CubeLetter>
              <CubeFace>⊥</CubeFace>
              <WcsChip>WCS ▿</WcsChip>
            </Canvas>
            <Footer>
              <LayoutTab $w={67} $active>模型</LayoutTab>
              <LayoutTab $w={71}>布局1</LayoutTab>
              <LayoutTab $w={73} $ml={5}>布局2</LayoutTab>
              <LayoutTab $w={29} $ml={7}>+</LayoutTab>
              <StatusBar>
                <StatusGroup><StatusBtn $w={37}>模型</StatusBtn></StatusGroup>
                <StatusGroup>
                  <StatusBtn $w={33}><StGrid /></StatusBtn>
                  <StatusBtn $w={30} $on><StDots /></StatusBtn>
                  <StatusBtn $w={25}><Caret /></StatusBtn>
                </StatusGroup>
                <StatusGroup>
                  <StatusBtn $w={34}><StOrtho /></StatusBtn>
                  <StatusBtn $w={31} $on><StPolar /></StatusBtn>
                  <StatusBtn $w={26}><Caret /></StatusBtn>
                  <StatusBtn $w={28}><StSnap /></StatusBtn>
                  <StatusBtn $w={26}><Caret /></StatusBtn>
                </StatusGroup>
                <StatusGroup>
                  <StatusBtn $w={31} $on><StAngle /></StatusBtn>
                </StatusGroup>
                <StatusGroup>
                  <StatusBtn $w={32} $on><StBox /></StatusBtn>
                  <StatusBtn $w={22}><Caret /></StatusBtn>
                </StatusGroup>
                <StatusGroup>
                  <StatusBtn $w={32} $on><StList /></StatusBtn>
                </StatusGroup>
                <StatusGroup>
                  <StatusBtn $w={31} $on><StAnno on /></StatusBtn>
                  <StatusBtn $w={33}><StAnno bolt /></StatusBtn>
                </StatusGroup>
              </StatusBar>
            </Footer>
          </Win>
        </Body>
        <TaskBar>
          <TaskSlot><FaWindows size={28} /></TaskSlot>
          <TaskSlot><Mirrored><Search size={27} strokeWidth={1.5} /></Mirrored></TaskSlot>
          <TaskSlot><TaskView /></TaskSlot>
          <TaskSlot><WordIco /></TaskSlot>
          <TaskSlot><ReaderIco /></TaskSlot>
          <TaskSlot><VideoIco /></TaskSlot>
          <TaskBox><WpsIco /></TaskBox>
          <TaskBox $on><AcadTile /></TaskBox>
          <TaskBox><RecIco /></TaskBox>
          <Tray>
            <TrayItem $w={20}><ChevronUp size={14} color="#eee" strokeWidth={3} /></TrayItem>
            <TrayItem $w={48}><BatteryIco /></TrayItem>
            <TrayItem $w={24}><WifiIco /></TrayItem>
            <TrayItem $w={38}>英</TrayItem>
            <TrayItem $w={42}><SogouMark $s={19}>S</SogouMark></TrayItem>
            <Clock>18:37<br />2023/2/26</Clock>
          </Tray>
        </TaskBar>

        <SheetOne />
        <SheetTwo />
        <DocSheet />
        <DocDrawing />
        <Widget>
          <svg width="24" height="30">
            <path d="M12 1l11 4v10c0 7-5 11-11 14C6 26 1 22 1 15V5z" fill="#e2502a" />
            <text x="12" y="21" fontSize="17" fontWeight="700" textAnchor="middle" fill="#fff" fontFamily="Liberation Sans">2</text>
          </svg>
          <Percent>77<PercentSign>%</PercentSign></Percent>
          <WidgetBar />
          <SpeedBox />
          <Speed $mt={14}>
            <SpeedArrow>
              <svg width="8" height="14"><path d="M4 0l4 6H5v8H3V6H0z" fill="#4aa6e8" /></svg>
            </SpeedArrow>
            0.0<br />K/s
          </Speed>
          <Speed $mt={5}>
            <SpeedArrow>
              <svg width="8" height="14"><path d="M4 14l4-6H5V0H3v8H0z" fill="#4fbf6a" /></svg>
            </SpeedArrow>
            0.0<br />K/s
          </Speed>
        </Widget>
        <ImeTip>个性设置，点我看看</ImeTip>
        <ImeBar>
          <ImeItem $w={22} $ml={46}>中</ImeItem>
          <ImeItem $w={22} $ml={9}>°,</ImeItem>
          <ImeItem $w={26} $ml={7}><Smile size={24} strokeWidth={2} /></ImeItem>
          <ImeItem $w={24} $ml={6}><Mic size={24} strokeWidth={2.4} /></ImeItem>
          <ImeItem $w={28} $ml={5}><Keyboard size={26} strokeWidth={2} /></ImeItem>
          <ImeItem $w={26} $ml={7}><FaUser size={19} color="#b9c2cc" /></ImeItem>
          <ImeItem $w={26} $ml={1}><Shirt size={23} fill="#2b7bd0" /></ImeItem>
          <ImeItem $w={26} $ml={5}>
            <svg width="22" height="22"><path d="M0 0h10v10H0zM12 0h10v10H12zM0 12h10v10H0zM12 12h10v10H12z" fill="#2b7bd0" /></svg>
          </ImeItem>
          <ImeMarkWrap><SogouMark $s={37}>S</SogouMark></ImeMarkWrap>
        </ImeBar>
        <ImeTail />
        <Activate>
          激活 Windows
          <ActivateSub>转到"设置"以激活 Windows。</ActivateSub>
        </Activate>
      </Page>
    </>
  );
}
